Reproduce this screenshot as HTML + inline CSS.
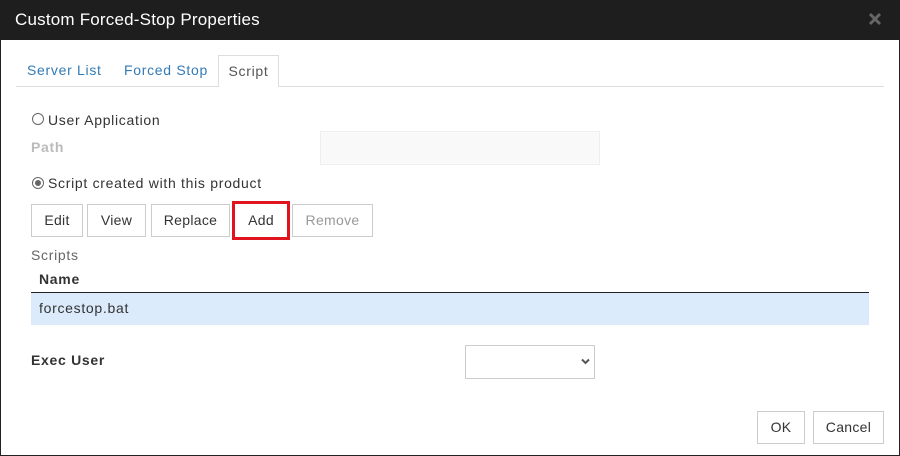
<!DOCTYPE html>
<html><head><meta charset="utf-8"><style>
*{box-sizing:border-box;margin:0;padding:0}
body{width:900px;height:456px;background:#fff;font-family:"Liberation Sans",sans-serif;font-size:14px;letter-spacing:0.7px;color:#333;position:relative;overflow:hidden}
.a{position:absolute}
.frame{left:0;top:0;width:900px;height:456px;border:1px solid #222}
.title{left:0;top:0;width:900px;height:40px;background:#1e1e1e;color:#fff;font-size:17px;letter-spacing:0.2px;line-height:40px;padding-left:15px}
.btn{border:1px solid #ccc;background:#fff;text-align:center;line-height:31px;height:33px;font-size:14px;color:#333;letter-spacing:0.3px}
.rad{width:12px;height:12px;border:1px solid #666;border-radius:50%;background:#fff}
</style></head><body>
<div class="a frame"></div>
<div class="a title">Custom Forced-Stop Properties</div>
<svg class="a" style="left:868px;top:12px" width="14" height="14" viewBox="0 0 14 14"><path d="M2 2L12 12M12 2L2 12" stroke="#666" stroke-width="3"/></svg>

<div class="a" style="left:16px;top:86px;width:868px;height:1px;background:#ddd"></div>
<div class="a" style="left:218px;top:55px;width:61px;height:32px;border:1px solid #ddd;border-bottom:none;background:#fff;text-align:center;line-height:30px;color:#555">Script</div>
<div class="a" style="left:27px;top:62px;color:#337ab7">Server List</div>
<div class="a" style="left:124px;top:62px;color:#337ab7">Forced Stop</div>

<div class="a rad" style="left:32px;top:113px"></div>
<div class="a" style="left:48px;top:112px">User Application</div>
<div class="a" style="left:31px;top:139px;color:#bbb;font-weight:bold">Path</div>
<div class="a" style="left:320px;top:131px;width:280px;height:34px;background:#f9f9f9;border:1px solid #eee"></div>
<div class="a rad" style="left:32px;top:177px"></div>
<div class="a" style="left:35px;top:180px;width:6px;height:6px;border-radius:50%;background:#666"></div>
<div class="a" style="left:48px;top:175px">Script created with this product</div>

<div class="a btn" style="left:31px;top:204px;width:52px">Edit</div>
<div class="a btn" style="left:87px;top:204px;width:59px">View</div>
<div class="a btn" style="left:151px;top:204px;width:79px">Replace</div>
<div class="a btn" style="left:232px;top:201px;width:58px;height:39px;border:3px solid #e0141e;line-height:33px">Add</div>
<div class="a btn" style="left:292px;top:204px;width:81px;color:#999">Remove</div>

<div class="a" style="left:31px;top:247px;color:#666">Scripts</div>
<div class="a" style="left:39px;top:271px;font-weight:bold">Name</div>
<div class="a" style="left:31px;top:292px;width:838px;height:1px;background:#222"></div>
<div class="a" style="left:31px;top:293px;width:838px;height:32px;background:#dcebfb;line-height:30px;padding-left:8px">forcestop.bat</div>

<div class="a" style="left:31px;top:352px;font-weight:bold">Exec User</div>
<div class="a" style="left:465px;top:345px;width:130px;height:34px;border:1px solid #ccc"></div>
<svg class="a" style="left:581px;top:358px" width="9" height="7" viewBox="0 0 9 7"><path d="M1 1.5L4.5 5L8 1.5" stroke="#555" stroke-width="2" fill="none"/></svg>

<div class="a btn" style="left:757px;top:411px;width:48px">OK</div>
<div class="a btn" style="left:813px;top:411px;width:71px">Cancel</div>
</body></html>
